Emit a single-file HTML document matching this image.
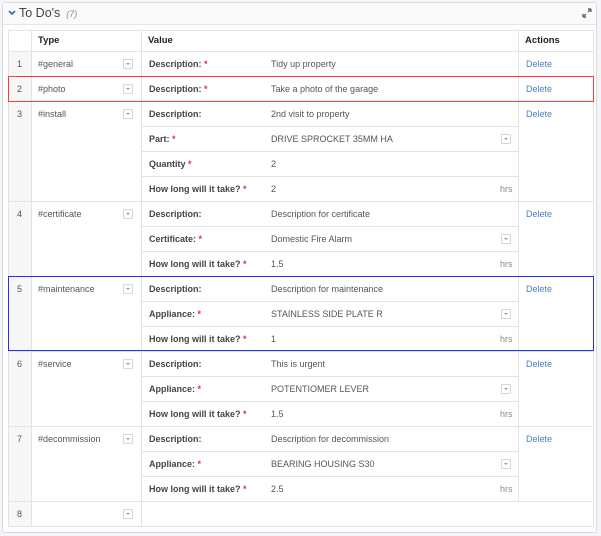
<!DOCTYPE html>
<html><head><meta charset="utf-8"><style>
*{box-sizing:border-box;margin:0;padding:0}
body{width:601px;height:536px;background:#f4f5f8;font-family:"Liberation Sans",Arial,sans-serif;position:relative;overflow:hidden}
.panel{position:absolute;left:2px;top:2px;width:595px;height:531px;background:#fff;border:1px solid #d8dbe0;border-radius:3px}
.hdr{position:absolute;left:0;top:0;width:593px;height:22px;border-bottom:1px solid #e6e6e6;background:#fafafa}
.t{position:absolute;white-space:nowrap;font-size:9px;color:#555;line-height:12px}
.b{font-weight:bold;color:#444}
.h{font-weight:bold;color:#222;font-size:9.5px}
.a{color:#d33}
.del{color:#4a80c4}
.hl{position:absolute;height:1px;background:#e3e3e3}
.vl{position:absolute;width:1px;background:#e3e3e3}
.dd{position:absolute;width:10px;height:10px;border:1px solid #d6d6d6;background:#fff;border-radius:1px}
.dd:after{content:"";position:absolute;left:2px;top:3px;border-left:2.5px solid transparent;border-right:2.5px solid transparent;border-top:2.5px solid #999}
.num{position:absolute;left:8px;top:51px;width:23px;height:475px;background:#f7f7f7}
</style></head><body>
<div class="panel"><div class="hdr"></div></div>
<svg style="position:absolute;left:8px;top:10px" width="8" height="6"><path d="M1 1 L4 4 L7 1" stroke="#3a6fb5" stroke-width="1.8" fill="none"/></svg>
<div class="t" style="left:19px;top:6px;font-size:12.5px;color:#444;line-height:15px">To Do's <span style="font-size:9px;font-style:italic;color:#888">&nbsp;(7)</span></div>
<svg style="position:absolute;left:582px;top:8px" width="10" height="10"><path d="M1 9 L4 6 M1 9 L1 6 M1 9 L4 9 M9 1 L6 4 M9 1 L6 1 M9 1 L9 4" stroke="#666" stroke-width="1.4" fill="none"/></svg>
<div class="num"></div>
<div style="position:absolute;left:8px;top:30px;width:586px;height:497px;border:1px solid #e3e3e3"></div>
<div class="vl" style="left:31px;top:30px;height:497px"></div>
<div class="vl" style="left:141px;top:30px;height:497px"></div>
<div class="vl" style="left:518px;top:30px;height:471px"></div>
<div class="hl" style="left:8px;top:51px;width:586px"></div>
<div class="hl" style="left:8px;top:76px;width:586px"></div>
<div class="hl" style="left:8px;top:101px;width:586px"></div>
<div class="hl" style="left:8px;top:201px;width:586px"></div>
<div class="hl" style="left:8px;top:276px;width:586px"></div>
<div class="hl" style="left:8px;top:351px;width:586px"></div>
<div class="hl" style="left:8px;top:426px;width:586px"></div>
<div class="hl" style="left:8px;top:501px;width:586px"></div>
<div class="hl" style="left:141px;top:126px;width:377px"></div>
<div class="hl" style="left:141px;top:151px;width:377px"></div>
<div class="hl" style="left:141px;top:176px;width:377px"></div>
<div class="hl" style="left:141px;top:226px;width:377px"></div>
<div class="hl" style="left:141px;top:251px;width:377px"></div>
<div class="hl" style="left:141px;top:301px;width:377px"></div>
<div class="hl" style="left:141px;top:326px;width:377px"></div>
<div class="hl" style="left:141px;top:376px;width:377px"></div>
<div class="hl" style="left:141px;top:401px;width:377px"></div>
<div class="hl" style="left:141px;top:451px;width:377px"></div>
<div class="hl" style="left:141px;top:476px;width:377px"></div>
<div class="t h" style="left:38px;top:35px">Type</div>
<div class="t h" style="left:148px;top:35px">Value</div>
<div class="t h" style="left:525px;top:35px">Actions</div>
<div class="t" style="left:17px;top:58px">1</div>
<div class="t" style="left:38px;top:58px">#general</div><div class="dd" style="left:123px;top:59px"></div>
<div class="t b" style="left:149px;top:58px">Description: <span class="a">*</span></div>
<div class="t" style="left:271px;top:58px">Tidy up property</div>
<div class="t del" style="left:526px;top:58px">Delete</div>
<div class="t" style="left:17px;top:83px">2</div>
<div class="t" style="left:38px;top:83px">#photo</div><div class="dd" style="left:123px;top:84px"></div>
<div class="t b" style="left:149px;top:83px">Description: <span class="a">*</span></div>
<div class="t" style="left:271px;top:83px">Take a photo of the garage</div>
<div class="t del" style="left:526px;top:83px">Delete</div>
<div class="t" style="left:17px;top:108px">3</div>
<div class="t" style="left:38px;top:108px">#install</div><div class="dd" style="left:123px;top:109px"></div>
<div class="t b" style="left:149px;top:108px">Description:</div>
<div class="t" style="left:271px;top:108px">2nd visit to property</div>
<div class="t del" style="left:526px;top:108px">Delete</div>
<div class="t b" style="left:149px;top:133px">Part: <span class="a">*</span></div>
<div class="t" style="left:271px;top:133px">DRIVE SPROCKET 35MM HA</div><div class="dd" style="left:501px;top:134px"></div>
<div class="t b" style="left:149px;top:158px">Quantity <span class="a">*</span></div>
<div class="t" style="left:271px;top:158px">2</div>
<div class="t b" style="left:149px;top:183px">How long will it take? <span class="a">*</span></div>
<div class="t" style="left:271px;top:183px">2</div><div class="t" style="left:500px;top:183px;color:#888">hrs</div>
<div class="t" style="left:17px;top:208px">4</div>
<div class="t" style="left:38px;top:208px">#certificate</div><div class="dd" style="left:123px;top:209px"></div>
<div class="t b" style="left:149px;top:208px">Description:</div>
<div class="t" style="left:271px;top:208px">Description for certificate</div>
<div class="t del" style="left:526px;top:208px">Delete</div>
<div class="t b" style="left:149px;top:233px">Certificate: <span class="a">*</span></div>
<div class="t" style="left:271px;top:233px">Domestic Fire Alarm</div><div class="dd" style="left:501px;top:234px"></div>
<div class="t b" style="left:149px;top:258px">How long will it take? <span class="a">*</span></div>
<div class="t" style="left:271px;top:258px">1.5</div><div class="t" style="left:500px;top:258px;color:#888">hrs</div>
<div class="t" style="left:17px;top:283px">5</div>
<div class="t" style="left:38px;top:283px">#maintenance</div><div class="dd" style="left:123px;top:284px"></div>
<div class="t b" style="left:149px;top:283px">Description:</div>
<div class="t" style="left:271px;top:283px">Description for maintenance</div>
<div class="t del" style="left:526px;top:283px">Delete</div>
<div class="t b" style="left:149px;top:308px">Appliance: <span class="a">*</span></div>
<div class="t" style="left:271px;top:308px">STAINLESS SIDE PLATE R</div><div class="dd" style="left:501px;top:309px"></div>
<div class="t b" style="left:149px;top:333px">How long will it take? <span class="a">*</span></div>
<div class="t" style="left:271px;top:333px">1</div><div class="t" style="left:500px;top:333px;color:#888">hrs</div>
<div class="t" style="left:17px;top:358px">6</div>
<div class="t" style="left:38px;top:358px">#service</div><div class="dd" style="left:123px;top:359px"></div>
<div class="t b" style="left:149px;top:358px">Description:</div>
<div class="t" style="left:271px;top:358px">This is urgent</div>
<div class="t del" style="left:526px;top:358px">Delete</div>
<div class="t b" style="left:149px;top:383px">Appliance: <span class="a">*</span></div>
<div class="t" style="left:271px;top:383px">POTENTIOMER LEVER</div><div class="dd" style="left:501px;top:384px"></div>
<div class="t b" style="left:149px;top:408px">How long will it take? <span class="a">*</span></div>
<div class="t" style="left:271px;top:408px">1.5</div><div class="t" style="left:500px;top:408px;color:#888">hrs</div>
<div class="t" style="left:17px;top:433px">7</div>
<div class="t" style="left:38px;top:433px">#decommission</div><div class="dd" style="left:123px;top:434px"></div>
<div class="t b" style="left:149px;top:433px">Description:</div>
<div class="t" style="left:271px;top:433px">Description for decommission</div>
<div class="t del" style="left:526px;top:433px">Delete</div>
<div class="t b" style="left:149px;top:458px">Appliance: <span class="a">*</span></div>
<div class="t" style="left:271px;top:458px">BEARING HOUSING S30</div><div class="dd" style="left:501px;top:459px"></div>
<div class="t b" style="left:149px;top:483px">How long will it take? <span class="a">*</span></div>
<div class="t" style="left:271px;top:483px">2.5</div><div class="t" style="left:500px;top:483px;color:#888">hrs</div>
<div class="t" style="left:17px;top:508px">8</div>
<div class="dd" style="left:123px;top:509px"></div>
<div style="position:absolute;left:8px;top:76px;width:586px;height:26px;border:1.5px solid #ff3a3a"></div>
<div style="position:absolute;left:8px;top:276px;width:586px;height:75px;border:1.5px solid #2a2ef0"></div>
</body></html>
